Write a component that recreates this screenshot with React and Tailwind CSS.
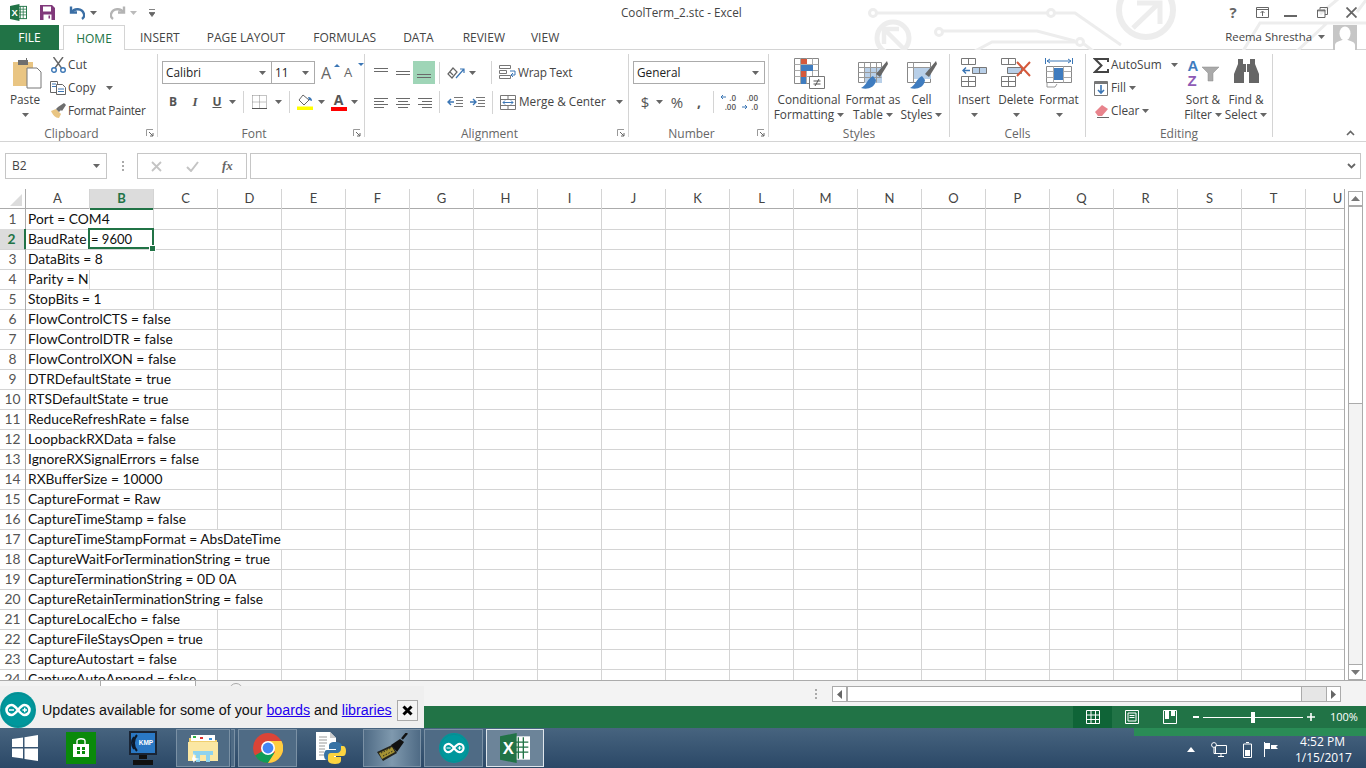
import React from "react";

const GREEN = "#217346";

const rows = [
  ["Port = COM4", 2],
  ["BaudRate", 1, "= 9600"],
  ["DataBits = 8", 2],
  ["Parity = N", 1],
  ["StopBits = 1", 2],
  ["FlowControlCTS = false", 3],
  ["FlowControlDTR = false", 3],
  ["FlowControlXON = false", 3],
  ["DTRDefaultState = true", 3],
  ["RTSDefaultState = true", 3],
  ["ReduceRefreshRate = false", 3],
  ["LoopbackRXData = false", 3],
  ["IgnoreRXSignalErrors = false", 3],
  ["RXBufferSize = 10000", 3],
  ["CaptureFormat = Raw", 3],
  ["CaptureTimeStamp = false", 3],
  ["CaptureTimeStampFormat = AbsDateTime", 5],
  ["CaptureWaitForTerminationString = true", 4],
  ["CaptureTerminationString = 0D 0A", 4],
  ["CaptureRetainTerminationString = false", 4],
  ["CaptureLocalEcho = false", 3],
  ["CaptureFileStaysOpen = true", 3],
  ["CaptureAutostart = false", 3],
  ["CaptureAutoAppend = false", 3],
];

const colLetters = "ABCDEFGHIJKLMNOPQRSTU".split("");
const spanClass = { 1: "col-span-1", 2: "col-span-2", 3: "col-span-3", 4: "col-span-4", 5: "col-span-5" };

function Caret({ className = "", color = "#666" }) {
  return (
    <svg width="7" height="4" viewBox="0 0 7 4" className={className}>
      <path d="M0 0h7L3.5 4z" fill={color} />
    </svg>
  );
}

function Launcher() {
  return (
    <svg width="8" height="8" viewBox="0 0 8 8" className="absolute right-[3px] bottom-[0px]">
      <path d="M.5 7V.5H7" fill="none" stroke="#999" />
      <path d="M3 3l4 4M7 4v3H4" fill="none" stroke="#666" />
    </svg>
  );
}

function Group({ label, width, launcher = true, children }) {
  return (
    <div className={`relative my-[4px] flex flex-col border-r border-[#d4d4d4] ${width}`}>
      <div className="h-[75px]">{children}</div>
      <div className={`h-[9px] text-center text-[12px] leading-[11px] text-[#666] ${launcher ? "pr-[14px]" : ""}`}>{label}</div>
      {launcher && <Launcher />}
    </div>
  );
}

function Big({ w, icon, l1, l2, caret = true }) {
  return (
    <div className={`flex flex-col items-center pt-[4px] leading-[15.5px] ${w}`}>
      <div className="flex h-[34px] items-start justify-center">{icon}</div>
      <div className="whitespace-nowrap">{l1}</div>
      <div className="flex h-[15px] items-center gap-[3px] whitespace-nowrap">
        {l2}
        {caret && <Caret />}
      </div>
    </div>
  );
}

function Small({ icon, label, caret, h = "h-[22px]" }) {
  return (
    <div className={`flex items-center whitespace-nowrap ${h}`}>
      <div className="flex w-[16px] justify-center">{icon}</div>
      <span className="ml-[2px]">{label}</span>
      {caret}
    </div>
  );
}

function Sep({ className = "" }) {
  return <div className={`h-[22px] w-px bg-[#d4d4d4] ${className}`} />;
}

function Lines({ ys, xs }) {
  return (
    <svg width="16" height="16" viewBox="0 0 16 16">
      {ys.map((y, i) => (
        <path key={i} d={`M${xs[i][0]} ${y + 0.5}H${xs[i][1]}`} stroke="#6a6a6a" />
      ))}
    </svg>
  );
}

function ExcelLogo({ size = 17, dark = false }) {
  return (
    <svg width={size} height={size} viewBox="0 0 18 18">
      <rect x="8" y="2.5" width="9.5" height="13" fill="#fff" stroke={dark ? "#fff" : "#217346"} />
      <path d="M11 2.5v13M14 2.5v13M8 5.5h9M8 8.5h9M8 11.5h9" stroke="#217346" strokeWidth=".8" />
      <path d="M0 2l10-2v18L0 16z" fill={GREEN} />
      <text x="5" y="12.5" textAnchor="middle" fontSize="10" fontWeight="700" fill="#fff" fontFamily="Liberation Sans">X</text>
    </svg>
  );
}

function ArduinoLogo({ size = 36 }) {
  return (
    <svg width={size} height={size} viewBox="0 0 36 36">
      <circle cx="18" cy="18" r="18" fill="#00979c" />
      <circle cx="18" cy="18" r="16.5" fill="none" stroke="#0a8a8f" />
      <path d="M11.5 13a5 5 0 1 0 0 10c5 0 8-10 13-10a5 5 0 1 1 0 10c-5 0-8-10-13-10z" fill="none" stroke="#fff" strokeWidth="2.6" />
      <path d="M9 18h5M22.5 18h4.5M24.7 15.8v4.4" stroke="#fff" strokeWidth="1.4" />
    </svg>
  );
}

function Circuit() {
  return (
    <svg width="1366" height="50" viewBox="0 0 1366 50" className="absolute top-0 left-0" fill="none" stroke="#ededed" strokeWidth="3">
      <circle cx="873" cy="13" r="3.5" />
      <path d="M877 13h170" />
      <circle cx="1051" cy="13" r="3.5" />
      <path d="M1055 13h20l46 32" />
      <circle cx="893" cy="38" r="16" strokeWidth="5" />
      <path d="M903 48L886 31M884 44V29h15" strokeWidth="4.5" />
      <circle cx="939" cy="32" r="3.5" />
      <path d="M943 31h94l38 10" />
      <circle cx="1080" cy="42" r="3.5" />
      <path d="M1076 42h-84l-17 9M1084 44l9 7" />
      <circle cx="1146" cy="10" r="27" strokeWidth="6" />
      <path d="M1133 28l26-25M1137 3h23v21" strokeWidth="5" />
      <path d="M1243 51l17-28h106M1320 14l18-15M1297 51l30-28M1357 12l9-12" strokeWidth="3" />
    </svg>
  );
}

function TitleBar() {
  return (
    <div className="relative h-[50px] border-b border-[#d4d4d4] text-[12px]">
      <Circuit />
      <div className="relative flex h-[25px] items-center">
        <div className="ml-[10px]"><ExcelLogo /></div>
        <svg width="15" height="15" viewBox="0 0 15 15" className="ml-[13px]">
          <path d="M0 0h12l3 3v12H0z" fill="#80397b" />
          <path d="M3 1.5h8v5H3z" fill="#fff" />
          <path d="M3.5 9.5h8V15h-8z" fill="#fff" />
          <path d="M8.5 10.5h1.5v3H8.5z" fill="#80397b" />
        </svg>
        <svg width="16" height="15" viewBox="0 0 16 15" className="ml-[14px]">
          <path d="M2 1.5v6h6" fill="none" stroke="#3b6fa5" strokeWidth="2.4" />
          <path d="M2.5 7.5C5 3 13 3 15 9c.6 2-.6 4-2 5" fill="none" stroke="#3b6fa5" strokeWidth="2.4" />
        </svg>
        <Caret className="ml-[5px]" />
        <svg width="16" height="15" viewBox="0 0 16 15" className="ml-[13px]">
          <path d="M14 1.5v6H8" fill="none" stroke="#b4b4b4" strokeWidth="2.4" />
          <path d="M13.5 7.5C11 3 3 3 1 9c-.6 2 .6 4 2 5" fill="none" stroke="#b4b4b4" strokeWidth="2.4" />
        </svg>
        <Caret className="ml-[4px]" color="#bbb" />
        <svg width="6" height="8" viewBox="0 0 6 8" className="ml-[12px]">
          <path d="M0 .5h6M0 3.5h6v0L3 7.5 0 3.5" fill="#666" stroke="#666" strokeWidth=".8" />
        </svg>
        <div className="mt-[1px] ml-[466px] w-[120px] text-[11.7px] whitespace-nowrap text-[#444]">CoolTerm_2.stc - Excel</div>
        <div className="ml-auto flex items-center">
          <span className="w-[14px] text-center text-[15px] font-bold text-[#666]">?</span>
          <svg width="13" height="11" viewBox="0 0 13 11" className="ml-[16px]">
            <path d="M.5.5h12v10H.5zM.5 2.5h12" fill="none" stroke="#666" />
            <path d="M6.5 9V4.5M4.5 6l2-2 2 2" fill="none" stroke="#666" />
          </svg>
          <div className="ml-[15px] h-[2px] w-[13px] translate-y-[3px] bg-[#666]" />
          <svg width="11" height="11" viewBox="0 0 11 11" className="ml-[20px]">
            <path d="M3 2.5V.5h7.5v7H8M.5 3h7.5v7.5H.5zM.5 3.8h7.5" fill="none" stroke="#666" />
          </svg>
          <svg width="11" height="11" viewBox="0 0 11 11" className="mr-[9px] ml-[18px]">
            <path d="M.5.5l10 10M10.5.5l-10 10" stroke="#666" strokeWidth="1.8" />
          </svg>
        </div>
      </div>
      <div className="relative flex h-[24px] items-center">
        <div className="flex h-[25px] w-[59px] items-center justify-center self-start bg-[#217346] pt-px text-white">FILE</div>
        <div className="ml-[4px] flex h-[25px] w-[62px] items-center justify-center self-start border-x border-t border-[#d4d4d4] bg-white pt-px text-[#217346]">HOME</div>
        <span className="mt-px ml-[15px]">INSERT</span>
        <span className="mt-px ml-[27px]">PAGE LAYOUT</span>
        <span className="mt-px ml-[28px]">FORMULAS</span>
        <span className="mt-px ml-[27px]">DATA</span>
        <span className="mt-px ml-[29px]">REVIEW</span>
        <span className="mt-px ml-[26px]">VIEW</span>
        <div className="ml-auto flex items-center">
          <span className="text-[11.4px] whitespace-nowrap">Reema Shrestha</span>
          <Caret className="ml-[6px]" />
          <div className="mr-[9px] ml-[8px] h-[25px] w-[24px] self-end overflow-hidden bg-[#c6c6c6]">
            <svg width="24" height="25" viewBox="0 0 24 25">
              <ellipse cx="12" cy="8.5" rx="5.5" ry="7" fill="#fff" />
              <path d="M2 25v-5c0-3 5-4 7-5h6c2 1 7 2 7 5v5z" fill="#fff" />
            </svg>
          </div>
        </div>
      </div>
    </div>
  );
}

function Clipboard() {
  return (
    <Group label="Clipboard" width="w-[158px]">
      <div className="flex">
        <div className="flex w-[50px] flex-col items-center pt-[4px]">
          <svg width="30" height="31" viewBox="0 0 30 31" className="ml-[3px]">
            <path d="M1 4h20v24H1z" fill="#e9c583" />
            <path d="M7 2h8V0h-1v2M6 2h10v5H6z" fill="#6e6e6e" />
            <path d="M15 10h10l4 4v16H15z" fill="#fff" stroke="#777" />
          </svg>
          <span className="mt-[3px] leading-[15px]">Paste</span>
          <Caret className="mt-[6px]" />
        </div>
        <div className="flex flex-col">
          <Small
            icon={
              <svg width="15" height="16" viewBox="0 0 15 16">
                <path d="M2.5 0l8 11M12 0L4 11" stroke="#666" strokeWidth="1.4" />
                <circle cx="3" cy="13" r="2.3" fill="none" stroke="#3b76b5" strokeWidth="1.4" />
                <circle cx="12" cy="13" r="2.3" fill="none" stroke="#3b76b5" strokeWidth="1.4" />
              </svg>
            }
            label="Cut"
            h="h-[22px]"
          />
          <Small
            icon={
              <svg width="16" height="14" viewBox="0 0 16 14">
                <path d="M.5.5h7v11h-7z" fill="#fff" stroke="#666" />
                <path d="M6.5 3.5h6l3 3v7h-9z" fill="#fff" stroke="#666" />
                <path d="M2 3h4M2 5.5h4M8 8h6M8 10.5h6" stroke="#3b76b5" />
              </svg>
            }
            label="Copy"
            caret={<Caret className="ml-[10px]" />}
            h="h-[24px]"
          />
          <Small
            icon={
              <svg width="16" height="15" viewBox="0 0 16 15">
                <path d="M1 8l5-2 5 5-2 4c-4 0-6-3-8-7z" fill="#e9c583" />
                <path d="M6 6l2-2 3 3-2 2zM8 4l6-4 2 2-4 6z" fill="#6e6e6e" />
              </svg>
            }
            label={<span className="tracking-[-0.35px]">Format Painter</span>}
            h="h-[21px]"
          />
        </div>
      </div>
    </Group>
  );
}

function FontGroup() {
  return (
    <Group label="Font" width="w-[207px]">
      <div className="mt-[7px] ml-[4px] flex h-[23px] items-center">
        <div className="flex h-[23px] w-[110px] items-center justify-between border border-[#ababab] bg-white pr-[5px] pl-[3px] text-[#222]">
          Calibri <Caret />
        </div>
        <div className="-ml-px flex h-[23px] w-[44px] items-center justify-between border border-[#ababab] bg-white pr-[5px] pl-[3px] text-[#222]">
          11 <Caret />
        </div>
        <div className="relative ml-[6px] w-[20px] text-[16px] leading-none text-[#666]">
          A
          <svg width="6" height="3" viewBox="0 0 6 3" className="absolute top-[-1px] right-[1px]"><path d="M0 3L3 0l3 3z" fill="#3b76b5" /></svg>
        </div>
        <div className="relative ml-[3px] w-[20px] text-[13px] leading-none text-[#666]">
          A
          <svg width="6" height="3" viewBox="0 0 6 3" className="absolute top-[-3px] right-[0px]"><path d="M0 0l3 3 3-3z" fill="#3b76b5" /></svg>
        </div>
      </div>
      <div className="mt-[7px] flex h-[22px] items-center">
        <span className="ml-[10px] w-[10px] text-center text-[12px] font-bold text-[#555]">B</span>
        <span className="ml-[12px] w-[10px] text-center font-['Liberation_Serif',serif] text-[13px] font-bold text-[#555] italic">I</span>
        <span className="ml-[12px] w-[10px] text-center text-[12px] font-bold text-[#555] underline">U</span>
        <Caret className="ml-[7px]" />
        <Sep className="ml-[7px]" />
        <svg width="15" height="14" viewBox="0 0 15 14" className="ml-[8px]">
          <path d="M.5.5h14v13M.5.5v13M7.5.5v13M.5 7h14" fill="none" stroke="#888" strokeDasharray="1 1" />
          <path d="M0 13.5h15" stroke="#555" />
        </svg>
        <Caret className="ml-[8px]" />
        <Sep className="ml-[7px]" />
        <svg width="17" height="16" viewBox="0 0 17 16" className="ml-[7px]">
          <path d="M6 1l6 5-5 5-5-5z" fill="#fff" stroke="#666" />
          <path d="M11 3c3 0 4 2 4 4l-3-1z" fill="#3b76b5" />
          <path d="M0 12.5h16V16H0z" fill="#ff0" />
        </svg>
        <Caret className="ml-[4px]" />
        <div className="ml-[5px] flex w-[17px] flex-col items-center">
          <span className="h-[12px] text-[14px] leading-[12px] font-bold text-[#555]">A</span>
          <div className="mt-[1px] h-[4px] w-[16px] bg-[#f00]" />
        </div>
        <Caret className="ml-[4px]" />
      </div>
    </Group>
  );
}

function AlignmentGroup() {
  return (
    <Group label="Alignment" width="w-[264px]">
      <div className="mt-[7px] ml-[8px] flex h-[23px] items-center">
        <Lines ys={[3, 6]} xs={[[1, 15], [1, 15]]} />
        <div className="ml-[6px]"><Lines ys={[6, 9]} xs={[[1, 15], [1, 15]]} /></div>
        <div className="ml-[2px] flex h-[23px] w-[22px] items-center justify-center bg-[#9fd5b7]">
          <Lines ys={[9, 12]} xs={[[1, 15], [1, 15]]} />
        </div>
        <Sep className="ml-[4px]" />
        <svg width="18" height="14" viewBox="0 0 18 14" className="ml-[7px]">
          <path d="M1 8l5-6 4 4-5 6zM3 6l3 3" fill="none" stroke="#666" strokeWidth="1.2" />
          <path d="M9 12l8-9M13 3h4v4" fill="none" stroke="#3b76b5" strokeWidth="1.2" />
        </svg>
        <Caret className="ml-[4px]" />
        <div className="ml-[15px] h-[23px] w-px bg-[#d4d4d4]" />
        <svg width="17" height="16" viewBox="0 0 17 16" className="ml-[7px]">
          <path d="M.5.5h11v3H.5zM.5 5.5h7v3h-7zM.5 10.5h11v3H.5z" fill="#fff" stroke="#777" />
          <path d="M11 6h5v4h-4M14 8l-2 2 2 2" fill="none" stroke="#3b76b5" />
        </svg>
        <span className="ml-[2px] tracking-[-0.2px] whitespace-nowrap">Wrap Text</span>
      </div>
      <div className="mt-[7px] ml-[8px] flex h-[22px] items-center">
        <Lines ys={[4, 7, 10, 13]} xs={[[1, 15], [1, 11], [1, 15], [1, 11]]} />
        <div className="ml-[6px]"><Lines ys={[4, 7, 10, 13]} xs={[[1, 15], [3, 13], [1, 15], [3, 13]]} /></div>
        <div className="ml-[6px]"><Lines ys={[4, 7, 10, 13]} xs={[[1, 15], [5, 15], [1, 15], [5, 15]]} /></div>
        <Sep className="ml-[6px]" />
        <svg width="16" height="12" viewBox="0 0 16 12" className="ml-[7px]">
          <path d="M7 1.5h9M9 4.5h7M9 7.5h7M7 10.5h9" stroke="#777" />
          <path d="M7 6H1M4 3L1 6l3 3" fill="none" stroke="#3b76b5" strokeWidth="1.4" />
        </svg>
        <svg width="16" height="12" viewBox="0 0 16 12" className="ml-[6px]">
          <path d="M7 1.5h9M9 4.5h7M9 7.5h7M7 10.5h9" stroke="#777" />
          <path d="M1 6h6M4 3l3 3-3 3" fill="none" stroke="#3b76b5" strokeWidth="1.4" />
        </svg>
        <div className="ml-[7px] h-[23px] w-px bg-[#d4d4d4]" />
        <svg width="16" height="15" viewBox="0 0 16 15" className="ml-[7px]">
          <path d="M.5.5h15v14H.5zM.5 4.5h15M.5 10.5h15M8 .5v4M8 10.5v4" fill="#fff" stroke="#777" />
          <path d="M3 7.5h10M5 5.5l-2 2 2 2M11 5.5l2 2-2 2" fill="none" stroke="#3b76b5" />
        </svg>
        <span className="ml-[3px] whitespace-nowrap">Merge &amp; Center</span>
        <Caret className="ml-[10px]" />
      </div>
    </Group>
  );
}

function NumberGroup() {
  return (
    <Group label="Number" width="w-[140px]">
      <div className="mt-[7px] ml-[4px] flex h-[23px] w-[132px] items-center justify-between border border-[#ababab] bg-white pr-[5px] pl-[3px] text-[#222]">
        General <Caret />
      </div>
      <div className="mt-[7px] flex h-[22px] items-center">
        <span className="ml-[10px] w-[12px] text-center text-[15px] text-[#555]">$</span>
        <Caret className="ml-[5px]" />
        <span className="ml-[6px] w-[16px] text-center text-[15px] text-[#555]">%</span>
        <span className="ml-[11px] w-[6px] text-center text-[14px] leading-[14px] font-bold text-[#555]">,</span>
        <Sep className="ml-[11px]" />
        <div className="relative ml-[6px] h-[18px] w-[16px] text-[8px] leading-[9px] font-semibold text-[#555]">
          <div className="text-right">.0</div>
          <div className="text-right">.00</div>
          <svg width="6" height="6" viewBox="0 0 6 6" className="absolute top-[1px] left-0"><path d="M6 3H1M3 1L1 3l2 2" fill="none" stroke="#3b76b5" /></svg>
        </div>
        <div className="relative ml-[6px] h-[18px] w-[16px] text-[8px] leading-[9px] font-semibold text-[#555]">
          <div className="text-right">.00</div>
          <div className="text-right">.0</div>
          <svg width="6" height="6" viewBox="0 0 6 6" className="absolute bottom-[1px] left-0"><path d="M0 3h5M3 1l2 2-2 2" fill="none" stroke="#3b76b5" /></svg>
        </div>
      </div>
    </Group>
  );
}

function TableGrid({ fill }) {
  return (
    <>
      <path d="M.5 4.5h23v20H.5z" fill="#fff" stroke="#888" />
      {fill}
      <path d="M.5 9.5h23M.5 14.5h23M.5 19.5h23M6.5 4.5v20M12.5 4.5v20M18.5 4.5v20" stroke="#999" fill="none" />
    </>
  );
}

function StylesGroup() {
  return (
    <Group label="Styles" width="w-[181px]" launcher={false}>
      <div className="flex">
        <Big
          w="w-[80px]"
          l1="Conditional"
          l2="Formatting"
          icon={
            <svg width="31" height="31" viewBox="0 0 31 31">
              <path d="M.5.5h24v25H.5z" fill="#fff" stroke="#888" />
              <path d="M6.5.5v25M12.5.5v25M18.5.5v25M.5 6.5h24M.5 12.5h24M.5 18.5h24" stroke="#aaa" />
              <path d="M7 1h6v5H7zM7 7h12v5H7zM7 19h5v6H7z" fill="#d5593b" />
              <path d="M7 7h12v6H7z" fill="#3f7cbf" />
              <path d="M7 13h5v6H7z" fill="#d5593b" />
              <path d="M7 19h5v7H7z" fill="#3f7cbf" />
              <path d="M15.5 18.5h15v12h-15z" fill="#fff" stroke="#777" />
              <path d="M19.5 23h7M19.5 26h7M21 28l4-7" stroke="#555" fill="none" />
            </svg>
          }
        />
        <Big
          w="w-[48px]"
          l1="Format as"
          l2="Table"
          icon={
            <svg width="30" height="31" viewBox="0 0 30 31">
              <TableGrid fill={<path d="M6 9h18v16H6z" fill="#b8cfe8" />} />
              <path d="M18 16L29 3l1 3-8 13z" fill="#666" />
              <path d="M18 16c-6 3-6 9-12 12 6 2 14 0 15-8z" fill="#3f7cbf" transform="translate(-3 2)" />
            </svg>
          }
        />
        <Big
          w="w-[49px]"
          l1="Cell"
          l2="Styles"
          icon={
            <svg width="30" height="31" viewBox="0 0 30 31">
              <path d="M.5 4.5h23v20H.5z" fill="#fff" stroke="#888" />
              <path d="M6 9h18v12H6z" fill="#b8cfe8" />
              <path d="M.5 9.5h23M6.5 4.5v20" stroke="#999" fill="none" />
              <path d="M18 16L29 3l1 3-8 13z" fill="#666" />
              <path d="M18 16c-6 3-6 9-12 12 6 2 14 0 15-8z" fill="#3f7cbf" transform="translate(-3 2)" />
            </svg>
          }
        />
      </div>
    </Group>
  );
}

function CellsGroup() {
  return (
    <Group label="Cells" width="w-[136px]" launcher={false}>
      <div className="ml-[4px] flex">
        <Big
          w="w-[40px]"
          l1="Insert"
          l2=""
          icon={
            <svg width="26" height="29" viewBox="0 0 26 29">
              <path d="M.5.5h14v6H.5zM7.5.5v6M.5 18.5h14v10H.5zM7.5 18.5v10M.5 23.5h14" fill="none" stroke="#777" />
              <path d="M11.5 9.5h14v6h-14zM18.5 9.5v6" fill="#b8cfe8" stroke="#777" />
              <path d="M9 12.5H2M5 9.5l-3 3 3 3" fill="none" stroke="#3b76b5" strokeWidth="1.4" />
            </svg>
          }
        />
        <Big
          w="w-[44px]"
          l1="Delete"
          l2=""
          icon={
            <svg width="31" height="29" viewBox="0 0 31 29">
              <path d="M.5.5h14v6H.5zM7.5.5v6M.5 18.5h14v10H.5zM7.5 18.5v10M.5 23.5h14" fill="none" stroke="#777" />
              <path d="M6.5 9.5h14v6h-14z" fill="#b8cfe8" stroke="#777" />
              <path d="M16 4l13 14M29 4L16 18" stroke="#d5593b" strokeWidth="2" />
            </svg>
          }
        />
        <Big
          w="w-[42px]"
          l1="Format"
          l2=""
          icon={
            <svg width="28" height="30" viewBox="0 0 28 30">
              <path d="M.5 0v6M27.5 0v6M2 3h24M5 1L2 3l3 2M23 1l3 2-3 2" fill="none" stroke="#3b76b5" />
              <path d="M1.5 8.5h25v16h-25z" fill="#fff" stroke="#888" />
              <path d="M8.5 8.5v16M18.5 8.5v16M1.5 13.5h25M1.5 19.5h25" stroke="#aaa" />
              <path d="M9 10h9v12H9z" fill="#3f7cbf" />
              <path d="M2 25v4h8l2-3" fill="none" stroke="#999" />
            </svg>
          }
        />
      </div>
    </Group>
  );
}

function EditingGroup() {
  return (
    <Group label="Editing" width="w-[187px]" launcher={false}>
      <div className="flex">
        <div className="flex w-[95px] flex-col pl-[7px]">
          <Small
            h="h-[22px]"
            icon={
              <svg width="16" height="15" viewBox="0 0 16 15">
                <path d="M15 4V1H2l6.5 6.5L2 14h13v-3" fill="none" stroke="#444" strokeWidth="2" />
              </svg>
            }
            label="AutoSum"
            caret={<Caret className="ml-[9px]" />}
          />
          <Small
            h="h-[24px]"
            icon={
              <svg width="14" height="15" viewBox="0 0 14 15">
                <path d="M.5.5h13v14H.5z" fill="#fff" stroke="#777" />
                <path d="M.5 2h13" stroke="#777" strokeWidth="2" />
                <path d="M7 4v8M4 9l3 3 3-3" fill="none" stroke="#3b76b5" strokeWidth="1.6" />
              </svg>
            }
            label="Fill"
            caret={<Caret className="ml-[3px]" />}
          />
          <Small
            h="h-[21px]"
            icon={
              <svg width="15" height="14" viewBox="0 0 15 14">
                <path d="M1 8l7-7 6 4-6 7H4z" fill="#e8838c" />
                <path d="M3 13.5h12" stroke="#666" />
              </svg>
            }
            label="Clear"
            caret={<Caret className="ml-[3px]" />}
          />
        </div>
        <Big
          w="w-[44px]"
          l1="Sort &"
          l2="Filter"
          icon={
            <div className="relative h-[30px] w-[31px] font-['Liberation_Sans',sans-serif] text-[15px] leading-[15px] font-bold">
              <div className="text-[#3f7cbf]">A</div>
              <div className="text-[#8e5bb5]">Z</div>
              <svg width="17" height="16" viewBox="0 0 17 16" className="absolute top-[8px] right-0">
                <path d="M0 1h17l-6 6v8H6V7z" fill="#aaa" stroke="#888" strokeWidth=".5" />
              </svg>
            </div>
          }
        />
        <Big
          w="w-[42px]"
          l1="Find &"
          l2="Select"
          icon={
            <svg width="27" height="26" viewBox="0 0 27 26">
              <path d="M5 1h5v5h7V1h5v5l4 10v9H16V14h-5v11H1v-9L5 6z" fill="#666" />
              <path d="M13.5 6v8" stroke="#fff" />
            </svg>
          }
        />
      </div>
    </Group>
  );
}

function Ribbon() {
  return (
    <div className="flex h-[92px] border-b border-[#d4d4d4] bg-white">
      <Clipboard />
      <FontGroup />
      <AlignmentGroup />
      <NumberGroup />
      <StylesGroup />
      <CellsGroup />
      <EditingGroup />
      <div className="flex flex-1 items-end justify-end pr-[11px] pb-[5px]">
        <svg width="9" height="6" viewBox="0 0 9 6"><path d="M1 5l3.5-3.5L8 5" fill="none" stroke="#666" strokeWidth="1.6" /></svg>
      </div>
    </div>
  );
}

function FormulaBar() {
  return (
    <div className="flex h-[47px] items-start bg-white pt-[11px]">
      <div className="ml-[5px] flex h-[26px] w-[102px] items-center justify-between border border-[#c6c6c6] pr-[6px] pl-[6px] text-[12px] text-[#444]">
        B2 <Caret />
      </div>
      <div className="ml-[15px] flex h-[26px] w-[2px] flex-col items-center justify-center gap-[2px]">
        <i className="h-[2px] w-[2px] bg-[#aaa]" />
        <i className="h-[2px] w-[2px] bg-[#aaa]" />
        <i className="h-[2px] w-[2px] bg-[#aaa]" />
      </div>
      <div className="ml-[13px] flex h-[26px] w-[110px] items-center border border-[#c6c6c6]">
        <svg width="11" height="11" viewBox="0 0 11 11" className="ml-[13px]"><path d="M1 1l9 9M10 1l-9 9" stroke="#c4c4c4" strokeWidth="1.8" /></svg>
        <svg width="13" height="11" viewBox="0 0 13 11" className="ml-[24px]"><path d="M1 6l4 4 7-9" fill="none" stroke="#c4c4c4" strokeWidth="2" /></svg>
        <span className="ml-[23px] font-['Liberation_Serif',serif] text-[13px] font-bold text-[#666] italic">fx</span>
      </div>
      <div className="ml-[3px] flex h-[26px] w-[1111px] items-center justify-end border border-[#c6c6c6] pr-[4px]">
        <svg width="9" height="6" viewBox="0 0 9 6"><path d="M1 1l3.5 3.5L8 1" fill="none" stroke="#666" strokeWidth="1.8" /></svg>
      </div>
    </div>
  );
}

function Sheet() {
  return (
    <div className="flex h-[491px] bg-white">
      <div className="w-[1345px] overflow-hidden border-r border-[#ababab]">
        <div className="grid h-[20px] w-[1370px] grid-cols-[26px_repeat(21,64px)] border-b border-[#ababab] text-center font-['Lato',sans-serif] text-[13px] text-[#444]">
          <div className="flex items-end justify-end border-r border-[#ababab] pr-[3px] pb-[3px]">
            <svg width="12" height="12" viewBox="0 0 12 12"><path d="M12 0v12H0z" fill="#dcdcdc" /></svg>
          </div>
          {colLetters.map((c) =>
            c === "B" ? (
              <div key={c} className="-mb-px border-r border-b-2 border-[#d4d4d4] border-b-[#217346] bg-[#dcdcdc] leading-[19px] font-bold text-[#217346]">{c}</div>
            ) : (
              <div key={c} className="border-r border-[#d4d4d4] leading-[19px]">{c}</div>
            )
          )}
        </div>
        {rows.map(([text, span, b], i) => {
          const selected = i === 1;
          const used = span + (b ? 1 : 0);
          return (
            <div key={i} className="grid h-[20px] w-[1370px] grid-cols-[26px_repeat(21,64px)] font-['Lato',sans-serif] text-[13.8px] text-[#111]">
              <div className={selected ? "border-r-2 border-b border-[#217346] border-b-[#d4d4d4] bg-[#dcdcdc] pr-px text-center leading-[20px] font-bold text-[#217346]" : "border-r border-b border-[#ababab] border-b-[#d4d4d4] text-center leading-[20px] text-[#555]"}>{i + 1}</div>
              <div className={`border-r border-b border-[#d4d4d4] pl-[2px] leading-[20px] whitespace-nowrap ${spanClass[span]} ${b ? "overflow-hidden" : "overflow-visible"}`}>{text}</div>
              {b && (
                <div className="relative border-r border-b border-[#d4d4d4] pl-px text-[13px] leading-[20px]">
                  {b}
                  <div className="absolute -top-[1px] -left-[2px] h-[21px] w-[66px] border-2 border-[#217346]" />
                  <div className="absolute -right-[2px] -bottom-[2px] h-[5px] w-[5px] bg-[#217346] outline outline-white" />
                </div>
              )}
              {colLetters.slice(used).map((c) => (
                <div key={c} className="border-r border-b border-[#d4d4d4]" />
              ))}
            </div>
          );
        })}
      </div>
      <div className="ml-[3px] flex h-[489px] w-[15px] flex-col self-end border-x border-[#ababab]">
        <div className="flex h-[16px] items-center justify-center border-t border-b-2 border-[#ababab]">
          <svg width="9" height="5" viewBox="0 0 9 5"><path d="M0 5l4.5-5L9 5z" fill="#777" /></svg>
        </div>
        <div className="h-[197px] border-b border-[#ababab] bg-white" />
        <div className="flex-1 bg-[#f3f3f3]" />
        <div className="flex h-[16px] items-center justify-center border-t border-b border-[#ababab] bg-white">
          <svg width="9" height="5" viewBox="0 0 9 5"><path d="M0 0l4.5 5L9 0z" fill="#777" /></svg>
        </div>
      </div>
    </div>
  );
}

function TabStrip() {
  return (
    <div className="flex h-[26px] items-start border-t border-[#ababab] bg-[#f3f3f3]">
      <div className="ml-[100px] h-[25px] w-[96px] border-x border-[#ababab] bg-white" />
      <div className="mt-[2px] ml-[33px] h-[14px] w-[14px] rounded-full border border-[#aaa]" />
      <div className="mt-[5px] ml-[572px] flex h-[15px] w-[2px] flex-col items-center justify-center gap-[2px]">
        <i className="h-[2px] w-[2px] bg-[#aaa]" />
        <i className="h-[2px] w-[2px] bg-[#aaa]" />
        <i className="h-[2px] w-[2px] bg-[#aaa]" />
      </div>
      <div className="mt-[5px] ml-[15px] flex h-[16px] w-[509px] border border-[#ababab] bg-[#e6e6e6]">
        <div className="flex w-[15px] items-center justify-center border-r-2 border-[#ababab] bg-white">
          <svg width="5" height="9" viewBox="0 0 5 9"><path d="M5 0L0 4.5 5 9z" fill="#666" /></svg>
        </div>
        <div className="w-[454px] border-r border-[#ababab] bg-white" />
        <div className="flex-1" />
        <div className="flex w-[14px] items-center justify-center border-l border-[#ababab] bg-white">
          <svg width="5" height="9" viewBox="0 0 5 9"><path d="M0 0l5 4.5L0 9z" fill="#666" /></svg>
        </div>
      </div>
    </div>
  );
}

function StatusBar() {
  return (
    <div className="flex h-[22px] items-center bg-[#217346] text-white">
      <div className="ml-[1073px] flex h-[22px] w-[39px] items-center justify-center bg-[#0f6437]">
        <svg width="14" height="14" viewBox="0 0 14 14"><path d="M.5.5h13v13H.5zM5 .5v13M9.5.5v13M.5 5h13M.5 9.5h13" fill="none" stroke="#fff" /></svg>
      </div>
      <div className="flex w-[39px] justify-center">
        <svg width="14" height="14" viewBox="0 0 14 14"><path d="M.5.5h13v13H.5z" fill="none" stroke="#fff" /><path d="M3 3h8v8H3z" fill="none" stroke="#fff" /><path d="M4.5 5.5h5M4.5 7.5h5" stroke="#fff" /></svg>
      </div>
      <div className="flex w-[37px] justify-center">
        <svg width="14" height="14" viewBox="0 0 14 14"><path d="M.5.5h13v13H.5z" fill="none" stroke="#fff" /><path d="M2 1h4v8H2zM8 1h4v5H8z" fill="#fff" /></svg>
      </div>
      <div className="ml-[5px] h-[2px] w-[6px] bg-white" />
      <div className="relative ml-[4px] flex h-[12px] w-[100px] items-center justify-center">
        <div className="h-px w-[100px] bg-white" />
        <div className="absolute h-[11px] w-[4px] bg-white" />
      </div>
      <svg width="8" height="8" viewBox="0 0 8 8" className="ml-[4px]"><path d="M4 0v8M0 4h8" stroke="#fff" strokeWidth="1.6" /></svg>
      <span className="ml-[15px] text-[11px]">100%</span>
    </div>
  );
}

function TaskButton({ w, ml, active, children }) {
  return (
    <div
      className={`flex h-[38px] items-center justify-center border ${w} ${ml} ${
        active ? "border-[#dfe6ec] bg-[#6c8499]" : "border-[#7b91a5] bg-[#4f6b85]"
      }`}
    >
      {children}
    </div>
  );
}

function Taskbar() {
  return (
    <div className="relative flex h-[40px] items-center bg-linear-to-b from-[#47647f] to-[#2b4867] text-white">
      <svg width="26" height="26" viewBox="0 0 26 26" className="ml-[12px]">
        <path d="M0 4l11-1.6V12H0zM12.5 2.2L26 0v12H12.5zM0 13.5h11v10L0 22zM12.5 13.5H26V26l-13.5-2z" fill="#fff" />
      </svg>
      <div className="ml-[28px] flex h-[32px] w-[30px] items-center justify-center bg-[#0a8a0a]">
        <svg width="20" height="20" viewBox="0 0 20 20">
          <path d="M2 6h16v13H2z" fill="#fff" />
          <path d="M6 6V3c0-3 8-3 8 0v3" fill="none" stroke="#fff" strokeWidth="1.4" />
          <path d="M6 9h3v3H6zM11 9h3v3h-3zM6 13h3v3H6zM11 13h3v3h-3z" fill="#0a8a0a" />
        </svg>
      </div>
      <svg width="28" height="34" viewBox="0 0 28 34" className="ml-[33px]">
        <path d="M0 0h28v24H0z" fill="#1a2535" />
        <path d="M2 2h24v20H2z" fill="#2a78c4" />
        <path d="M8 4a12 12 0 0 0 0 16M5 6a10 10 0 0 0 0 12" fill="none" stroke="#0c1a2b" strokeWidth="2" />
        <text x="17" y="14" fontSize="6.5" fontWeight="700" textAnchor="middle" fill="#fff" fontFamily="Liberation Sans">KMP</text>
        <path d="M10 24h8v4h-8zM4 29h20v5H4z" fill="#111" />
      </svg>
      <TaskButton w="w-[54px]" ml="ml-[19px]">
        <svg width="32" height="30" viewBox="0 0 32 30">
          <path d="M2 5h11l2 2h15v21H2z" fill="#f0cf6e" />
          <path d="M4 2h24v6H4z" fill="#fff" />
          <path d="M6 3h3v2H6z" fill="#2fb344" />
          <path d="M13 4h3v2h-3z" fill="#d33" />
          <path d="M22 5h3v2h-3z" fill="#3a8fd8" />
          <path d="M1 9h30v19H1z" fill="#fbe7a3" />
          <path d="M6 18h20v4H6zM9 22h4v7H9zM19 22h4v7h-4z" fill="#8ed3ef" />
          <path d="M5 26l2-6 1 5 5 1-5 1-1 3z" fill="#fff" />
        </svg>
      </TaskButton>
      <div className="ml-px h-[38px] w-[4px] border-y border-r border-[#7b91a5] bg-[#4f6b85]" />
      <TaskButton w="w-[59px]" ml="ml-[3px]">
        <svg width="30" height="30" viewBox="0 0 30 30">
          <circle cx="15" cy="15" r="15" fill="#db4437" />
          <path d="M15 15L2 22.5A15 15 0 0 0 15 30h0l7-9z" fill="#0f9d58" />
          <path d="M15 8h13.5A15 15 0 0 1 15 30l7-11z" fill="#ffcd40" />
          <circle cx="15" cy="15" r="7" fill="#fff" />
          <circle cx="15" cy="15" r="5.4" fill="#4285f4" />
        </svg>
      </TaskButton>
      <svg width="30" height="32" viewBox="0 0 30 32" className="ml-[19px]">
        <path d="M0 0h14l6 6v22H0z" fill="#fff" />
        <path d="M14 0v6h6" fill="#ccc" />
        <path d="M3 5h8M3 8h8M3 11h8M3 14h6M3 17h6M3 20h5M3 23h5" stroke="#999" />
        <path d="M19 10c-5 0-6 2-6 4v3h7v1H11c-2 0-3 2-3 5s1 5 3 5h2v-3c0-2 2-4 4-4h6c2 0 3-1 3-3v-4c0-2-2-4-7-4z" fill="#3873a5" />
        <path d="M19 10c-5 0-6 2-6 4v3h7v1H11c-2 0-3 2-3 5s1 5 3 5h2v-3c0-2 2-4 4-4h6c2 0 3-1 3-3v-4c0-2-2-4-7-4z" fill="#fcd440" transform="rotate(180 19 21)" />
      </svg>
      <div className="ml-[17px] flex h-[38px] w-[58px] items-center justify-center border border-[#7b91a5] bg-linear-to-r from-[#4f6b85] via-[#7f99ae] to-[#4f6b85]">
        <svg width="33" height="30" viewBox="0 0 33 30">
          <path d="M1 19l15-7 5 8-14 8z" fill="#24241c" />
          <path d="M3 20l13-6 3 5-13 7z" fill="#a59233" />
          <path d="M5 20l10-5M7 23l10-5" stroke="#2a2a20" strokeDasharray="1.5 1.5" />
          <path d="M15 12l9-6 4 3-7 10z" fill="#111" />
          <path d="M26 6l5-6" stroke="#111" strokeWidth="2.5" />
        </svg>
      </div>
      <TaskButton w="w-[59px]" ml="ml-[3px]"><ArduinoLogo size={30} /></TaskButton>
      <TaskButton w="w-[58px]" ml="ml-[3px]" active><ExcelLogo size={30} dark /></TaskButton>

      <div className="absolute top-0 right-0 h-[8px] w-[232px] bg-[#2a8c56]" />
      <div className="ml-auto flex items-center pt-[3px]">
        <svg width="8" height="5" viewBox="0 0 8 5"><path d="M0 5l4-5 4 5z" fill="#fff" /></svg>
        <svg width="16" height="16" viewBox="0 0 16 16" className="ml-[16px]">
          <path d="M4.5 3.5h11v8h-11zM10 11.5v3M7 14.5h6" fill="none" stroke="#fff" />
          <circle cx="3" cy="3" r="2.4" fill="#2b4867" stroke="#fff" />
          <path d="M3 5.5v6h2" fill="none" stroke="#fff" />
        </svg>
        <svg width="9" height="16" viewBox="0 0 9 16" className="ml-[16px]">
          <path d="M3 .5h3M.5 2h8v13.5h-8z" fill="none" stroke="#fff" />
          <path d="M2 8h5v6H2z" fill="#fff" />
        </svg>
        <svg width="14" height="15" viewBox="0 0 14 15" className="ml-[12px]">
          <path d="M.5 0v15" stroke="#fff" />
          <path d="M1 1h5v6H1zM7 3h7l-2 2 2 2H7z" fill="#fff" />
        </svg>
        <div className="mr-[16px] ml-[17px] w-[55px] text-center text-[12px] leading-[16px]">
          <div>4:52 PM</div>
          <div>1/15/2017</div>
        </div>
      </div>
    </div>
  );
}

function UpdateNotice() {
  return (
    <div className="absolute top-[686px] left-0 flex h-[42px] w-[424px] items-center bg-[#efefef] pt-[8px] font-['Liberation_Sans',sans-serif] text-[14.27px] text-[#111]">
      <div className="absolute top-[6px] left-0"><ArduinoLogo size={36} /></div>
      <div className="ml-[42px] whitespace-nowrap">
        Updates available for some of your{" "}
        <span className="text-[#2200ee] underline">boards</span> and{" "}
        <span className="text-[#2200ee] underline">libraries</span>
      </div>
      <div className="absolute top-[14px] left-[397px] flex h-[21px] w-[21px] items-center justify-center border border-[#aaa] bg-[#f4f4f4]">
        <svg width="11" height="11" viewBox="0 0 11 11"><path d="M1.5 1.5l8 8M9.5 1.5l-8 8" stroke="#000" strokeWidth="3" /></svg>
      </div>
    </div>
  );
}

export default function App() {
  return (
    <div className="relative flex h-[768px] w-[1366px] flex-col overflow-hidden bg-white font-['Open_Sans',sans-serif] text-[11.8px] text-[#444]">
      <TitleBar />
      <Ribbon />
      <FormulaBar />
      <Sheet />
      <TabStrip />
      <StatusBar />
      <Taskbar />
      <UpdateNotice />
    </div>
  );
}
